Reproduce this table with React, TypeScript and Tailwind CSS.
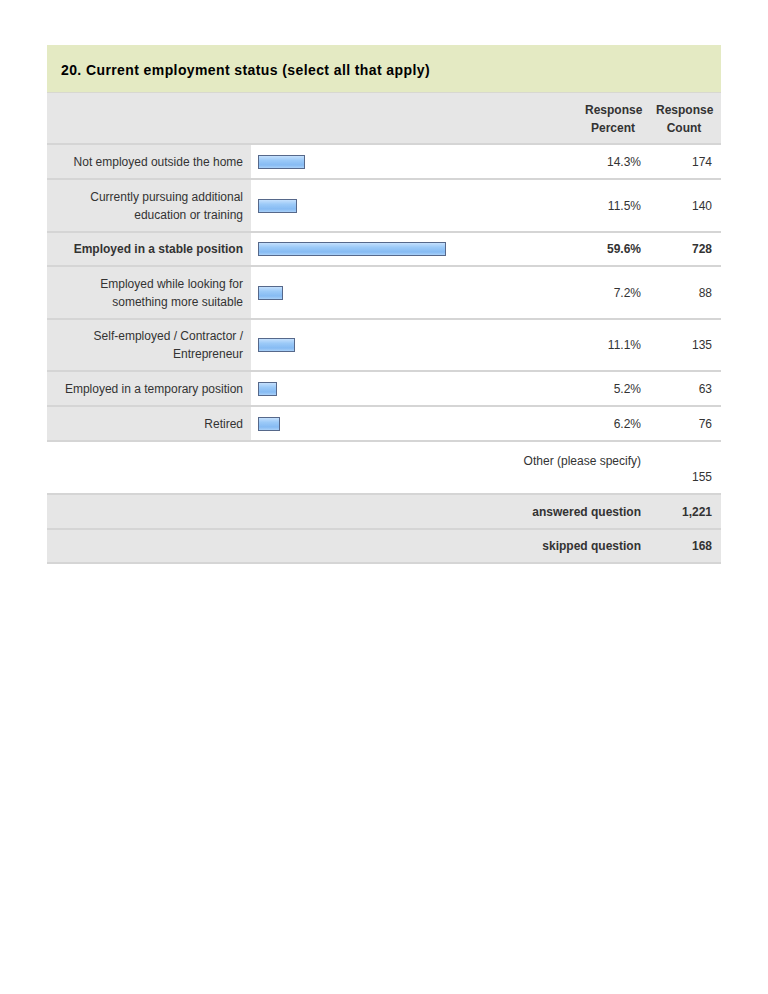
const rows = [
  { label: ['Not employed outside the home'], pct: 14.3, count: 174, h: 'h-[35px]' },
  { label: ['Currently pursuing additional', 'education or training'], pct: 11.5, count: 140, h: 'h-[53px]' },
  { label: ['Employed in a stable position'], pct: 59.6, count: 728, bold: true, h: 'h-[34px]' },
  { label: ['Employed while looking for', 'something more suitable'], pct: 7.2, count: 88, h: 'h-[53px]' },
  { label: ['Self-employed / Contractor /', 'Entrepreneur'], pct: 11.1, count: 135, h: 'h-[52px]' },
  { label: ['Employed in a temporary position'], pct: 5.2, count: 63, h: 'h-[35px]' },
  { label: ['Retired'], pct: 6.2, count: 76, h: 'h-[35px]' },
];

const sep = 'border-b-2 border-[#d5d5d5]';

export default function App() {
  return (
    <div className="min-h-[994px] bg-white pt-[45px] pl-[47px] font-['Liberation_Sans',Arial,sans-serif] text-[12px] leading-[18px] text-[#333]">
      <div className="w-[674px]">
        <div className="flex h-[48px] items-center border-b border-[#d8d8d0] bg-[#e4eac3] pl-[14px] pt-[2px] text-[14px] font-bold tracking-[0.4px] text-black">
          20. Current employment status (select all that apply)
        </div>
        <table className="w-full table-fixed border-collapse">
          <colgroup>
            <col className="w-[204px]" />
            <col />
            <col className="w-[71px]" />
            <col className="w-[71px]" />
          </colgroup>
          <tbody>
            <tr className={`bg-[#e6e6e6] ${sep}`}>
              <td colSpan={2} className="h-[51px]" />
              <td className="pl-[6px] pr-[9px] pt-[2px] text-center font-bold">
                Response
                <br />
                Percent
              </td>
              <td className="pl-[6px] pr-[9px] pt-[2px] text-center font-bold">
                Response
                <br />
                Count
              </td>
            </tr>
            {rows.map((r) => (
              <tr key={r.label[0]} className={sep}>
                <td className={`bg-[#e6e6e6] pr-[8px] text-right ${r.h} ${r.bold ? 'font-bold' : ''}`}>
                  {r.label.map((l, i) => (
                    <div key={i}>{l}</div>
                  ))}
                </td>
                <td className="pl-[7px] align-middle">
                  <div
                    className="h-[14px] border border-[#56688a] bg-[linear-gradient(to_bottom,#c4e0fd_0%,#9ccaf8_35%,#86bbf3_75%,#a9d0f8_100%)]"
                    style={{ width: Math.round(r.pct * 3.1 + 3) }}
                  />
                </td>
                <td className={`pr-[9px] text-right ${r.bold ? 'font-bold' : ''}`}>{r.pct.toFixed(1)}%</td>
                <td className={`pr-[9px] text-right ${r.bold ? 'font-bold' : ''}`}>{r.count}</td>
              </tr>
            ))}
            <tr className={sep}>
              <td colSpan={3} className="h-[53px] pr-[9px] pt-[10px] text-right align-top">
                Other (please specify)
              </td>
              <td className="pr-[9px] pt-[26px] text-right align-top">155</td>
            </tr>
            <tr className={`bg-[#e6e6e6] ${sep}`}>
              <td colSpan={3} className="h-[35px] pr-[9px] text-right font-bold">
                answered question
              </td>
              <td className="pr-[9px] text-right font-bold">1,221</td>
            </tr>
            <tr className={`bg-[#e6e6e6] ${sep}`}>
              <td colSpan={3} className="h-[34px] pr-[9px] text-right font-bold">
                skipped question
              </td>
              <td className="pr-[9px] text-right font-bold">168</td>
            </tr>
          </tbody>
        </table>
      </div>
    </div>
  );
}
